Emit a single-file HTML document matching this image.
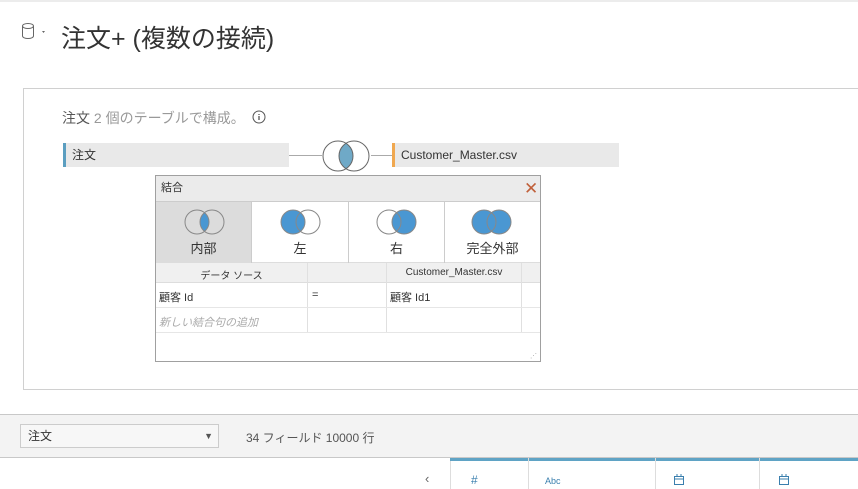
<!DOCTYPE html>
<html><head><meta charset="utf-8"><style>
*{box-sizing:border-box;margin:0;padding:0}
body{width:858px;height:489px;overflow:hidden;background:#fff;font-family:"Liberation Sans","Noto Sans CJK JP",sans-serif;position:relative;color:#333}
.a{position:absolute}
</style></head><body>
<div class="a" style="left:0;top:0;width:858px;height:2px;background:#ececec"></div>
<svg class="a" style="left:20px;top:22px" width="30" height="20"><ellipse cx="8" cy="4" rx="5.5" ry="2.5" fill="none" stroke="#666" stroke-width="1"/><path d="M2.5 4v10a5.5 2.5 0 0 0 11 0V4" fill="none" stroke="#666" stroke-width="1"/><path d="M22 9l3 0l-1.5 2z" fill="#666"/></svg>
<div class="a" style="left:61px;top:19px;font-size:25px;color:#333;white-space:nowrap">注文+ (複数の接続)</div>
<div class="a" style="left:23px;top:88px;width:840px;height:302px;border:1px solid #d0d0d0;background:#fff"></div>
<div class="a" style="left:62px;top:108px;font-size:14px;color:#999;white-space:nowrap"><span style="color:#555">注文</span> 2 個のテーブルで構成。</div>
<svg class="a" style="left:252px;top:110px" width="14" height="14"><circle cx="7" cy="7" r="6" fill="none" stroke="#555"/><path d="M7 6v4M7 4v1" stroke="#555" stroke-width="1.3"/></svg>
<div class="a" style="left:63px;top:143px;width:226px;height:24px;background:#e9e9e9;border-left:3px solid #5b9ec0;font-size:12px;line-height:24px;padding-left:6px">注文</div>
<div class="a" style="left:289px;top:155px;width:33px;height:1px;background:#aaa"></div>
<div class="a" style="left:371px;top:155px;width:21px;height:1px;background:#aaa"></div>
<svg class="a" style="left:321px;top:139px" width="52" height="34"><defs><clipPath id="c"><circle cx="17" cy="17" r="15"/></clipPath></defs><circle cx="33" cy="17" r="15" fill="#6fa9c7" clip-path="url(#c)"/><circle cx="17" cy="17" r="15" fill="none" stroke="#666"/><circle cx="33" cy="17" r="15" fill="none" stroke="#666"/></svg>
<div class="a" style="left:392px;top:143px;width:227px;height:24px;background:#e9e9e9;border-left:3px solid #f0a850;font-size:12px;line-height:24px;padding-left:6px">Customer_Master.csv</div>
<div class="a" style="left:155px;top:175px;width:386px;height:187px;border:1px solid #a0a0a0;background:#fff">
 <div class="a" style="left:0;top:0;width:384px;height:26px;background:#ebebeb;border-bottom:1px solid #ccc;font-size:11px;line-height:24px;padding-left:5px">結合</div>
 <div class="a" style="left:368px;top:3px;font-size:17px;color:#c0603a">✕</div>
 <div class="a" style="left:0;top:26px;width:384px;height:61px;border-bottom:1px solid #ddd"></div>
 <div class="a" style="left:0;top:26px;width:95px;height:61px;background:#dcdcdc"></div>
 <div class="a" style="left:95px;top:26px;width:1px;height:61px;background:#ccc"></div>
 <div class="a" style="left:192px;top:26px;width:1px;height:61px;background:#ccc"></div>
 <div class="a" style="left:288px;top:26px;width:1px;height:61px;background:#ccc"></div>
 <svg class="a" style="left:0;top:30px" width="384" height="34">
  <defs><clipPath id="l"><circle cx="41" cy="16" r="12"/></clipPath></defs>
  <circle cx="56" cy="16" r="12" fill="#4a97d2" clip-path="url(#l)"/>
  <circle cx="41" cy="16" r="12" fill="none" stroke="#888"/><circle cx="56" cy="16" r="12" fill="none" stroke="#888"/>
  <circle cx="137" cy="16" r="12" fill="#4a97d2"/><circle cx="137" cy="16" r="12" fill="none" stroke="#888"/><circle cx="152" cy="16" r="12" fill="none" stroke="#888"/>
  <circle cx="248" cy="16" r="12" fill="#4a97d2"/><circle cx="233" cy="16" r="12" fill="none" stroke="#888"/><circle cx="248" cy="16" r="12" fill="none" stroke="#888"/>
  <circle cx="328" cy="16" r="12" fill="#4a97d2"/><circle cx="343" cy="16" r="12" fill="#4a97d2"/><circle cx="328" cy="16" r="12" fill="none" stroke="#888"/><circle cx="343" cy="16" r="12" fill="none" stroke="#888"/>
 </svg>
 <div class="a" style="left:0;top:62px;width:95px;text-align:center;font-size:13px">内部</div>
 <div class="a" style="left:96px;top:62px;width:96px;text-align:center;font-size:13px">左</div>
 <div class="a" style="left:193px;top:62px;width:95px;text-align:center;font-size:13px">右</div>
 <div class="a" style="left:289px;top:62px;width:95px;text-align:center;font-size:13px">完全外部</div>
 <div class="a" style="left:0;top:87px;width:384px;height:20px;background:#f0f0f0;border-bottom:1px solid #ddd"></div>
 <div class="a" style="left:0;top:91px;width:151px;text-align:center;font-size:10px">データ ソース</div>
 <div class="a" style="left:231px;top:91px;width:134px;text-align:center;font-size:10px">Customer_Master.csv</div>
 <div class="a" style="left:151px;top:87px;width:1px;height:70px;background:#e0e0e0"></div>
 <div class="a" style="left:230px;top:87px;width:1px;height:70px;background:#e0e0e0"></div>
 <div class="a" style="left:365px;top:87px;width:1px;height:70px;background:#e0e0e0"></div>
 <div class="a" style="left:0;top:131px;width:384px;height:1px;background:#e6e6e6"></div>
 <div class="a" style="left:0;top:156px;width:384px;height:1px;background:#e6e6e6"></div>
 <div class="a" style="left:3px;top:113px;font-size:11px">顧客 Id</div>
 <div class="a" style="left:156px;top:113px;font-size:11px">=</div>
 <div class="a" style="left:234px;top:113px;font-size:11px">顧客 Id1</div>
 <div class="a" style="left:3px;top:138px;font-size:11px;color:#aaa;font-style:italic">新しい結合句の追加</div>
 <div class="a" style="left:374px;top:176px;font-size:7px;color:#aaa">⋰</div>
</div>
<div class="a" style="left:0;top:414px;width:858px;height:44px;background:#f3f3f3;border-top:1px solid #c8c8c8;border-bottom:1px solid #c8c8c8"></div>
<div class="a" style="left:20px;top:424px;width:199px;height:24px;background:#f7f7f7;border:1px solid #ccc;font-size:12px;line-height:22px;padding-left:7px">注文<span style="position:absolute;right:5px;font-size:9px;color:#555">▼</span></div>
<div class="a" style="left:246px;top:429px;font-size:12px;color:#555">34 フィールド 10000 行</div>
<div class="a" style="left:425px;top:471px;font-size:13px;color:#666">‹</div>
<div class="a" style="left:450px;top:458px;width:408px;height:31px;border-left:1px solid #ddd"></div>
<div class="a" style="left:450px;top:458px;width:408px;height:3px;background:#5fa3c5"></div>
<div class="a" style="left:528px;top:458px;width:1px;height:31px;background:#ddd"></div>
<div class="a" style="left:655px;top:458px;width:1px;height:31px;background:#ddd"></div>
<div class="a" style="left:759px;top:458px;width:1px;height:31px;background:#ddd"></div>
<div class="a" style="left:471px;top:473px;font-size:12px;color:#3a7fae">#</div>
<div class="a" style="left:545px;top:476px;font-size:9px;color:#3a7fae">Abc</div>
<svg class="a" style="left:674px;top:474px" width="10" height="11"><rect x="0.5" y="2.5" width="9" height="8" fill="none" stroke="#3a7fae"/><path d="M0 5h10M3 0v3M7 0v3" stroke="#3a7fae"/></svg>
<svg class="a" style="left:779px;top:474px" width="10" height="11"><rect x="0.5" y="2.5" width="9" height="8" fill="none" stroke="#3a7fae"/><path d="M0 5h10M3 0v3M7 0v3" stroke="#3a7fae"/></svg>
</body></html>
